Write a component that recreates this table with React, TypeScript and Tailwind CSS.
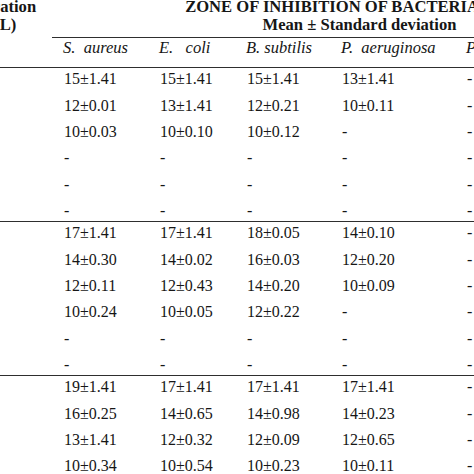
const cols = ["w-[96px]", "w-[87px]", "w-[95px]", "w-[125px]", "w-[100px]"];

const species = ["S.\u00a0 aureus", "E.\u00a0\u00a0 coli", "B. subtilis", "P.\u00a0 aeruginosa", "P. vulgaris"];

const groups: string[][][] = [
  [
    ["15±1.41", "15±1.41", "15±1.41", "13±1.41", "-"],
    ["12±0.01", "13±1.41", "12±0.21", "10±0.11", "-"],
    ["10±0.03", "10±0.10", "10±0.12", "-", "-"],
    ["-", "-", "-", "-", "-"],
    ["-", "-", "-", "-", "-"],
    ["-", "-", "-", "-", "-"],
  ],
  [
    ["17±1.41", "17±1.41", "18±0.05", "14±0.10", "-"],
    ["14±0.30", "14±0.02", "16±0.03", "12±0.20", "-"],
    ["12±0.11", "12±0.43", "14±0.20", "10±0.09", "-"],
    ["10±0.24", "10±0.05", "12±0.22", "-", "-"],
    ["-", "-", "-", "-", "-"],
    ["-", "-", "-", "-", "-"],
  ],
  [
    ["19±1.41", "17±1.41", "17±1.41", "17±1.41", "-"],
    ["16±0.25", "14±0.65", "14±0.98", "14±0.23", "-"],
    ["13±1.41", "12±0.32", "12±0.09", "12±0.65", "-"],
    ["10±0.34", "10±0.54", "10±0.23", "10±0.11", "-"],
  ],
];

function Row({ cells, last }: { cells: string[]; last: boolean }) {
  return (
    <div className={`flex ${last ? "flex-1 min-h-0" : "h-[26.4px] shrink-0"}`}>
      <div className="w-[127px] shrink-0" />
      {cells.map((c, i) => (
        <div key={i} className={`${cols[i]} shrink-0 pl-[12px] pt-[2px] text-[16px] leading-[18px] whitespace-nowrap`}>
          {c}
        </div>
      ))}
    </div>
  );
}

export default function App() {
  return (
    <div className="w-[474px] h-[474px] overflow-hidden bg-white text-[#161616] font-['Liberation_Serif','Times_New_Roman',serif]">
      <div className="ml-[-75px] mt-[-2.5px] w-[850px]">
        {/* spanning header */}
        <div className="flex">
          <div className="w-[127px] shrink-0 pr-[7px] text-center font-bold text-[16.6px] leading-[18px] whitespace-nowrap">
            Concentration
            <br />
            (mg/mL)
          </div>
          <div className="w-[615px] shrink-0 text-center font-bold text-[16.6px] leading-[18px] whitespace-nowrap pb-[3.5px] border-b-[1.5px] border-[#2e2e2e]">
            <div className="pr-[13px]">ZONE OF INHIBITION OF BACTERIA (mm)</div>
            <div>Mean ± Standard deviation</div>
          </div>
        </div>

        {/* species */}
        <div className="flex h-[30.3px] border-b-[1.5px] border-[#2e2e2e]">
          <div className="w-[127px] shrink-0" />
          {species.map((s, i) => (
            <div key={i} className={`${cols[i]} shrink-0 pl-[11px] pt-[1px] italic text-[16.5px] leading-[18px] whitespace-nowrap`}>
              {s}
            </div>
          ))}
        </div>

        {groups.map((g, gi) => (
          <div
            key={gi}
            className={`flex flex-col h-[154px] ${gi < groups.length - 1 ? "border-b-[1.5px] border-[#2e2e2e]" : ""}`}
          >
            {g.map((r, ri) => (
              <Row key={ri} cells={r} last={ri === g.length - 1 && gi < groups.length - 1} />
            ))}
          </div>
        ))}
      </div>
    </div>
  );
}
